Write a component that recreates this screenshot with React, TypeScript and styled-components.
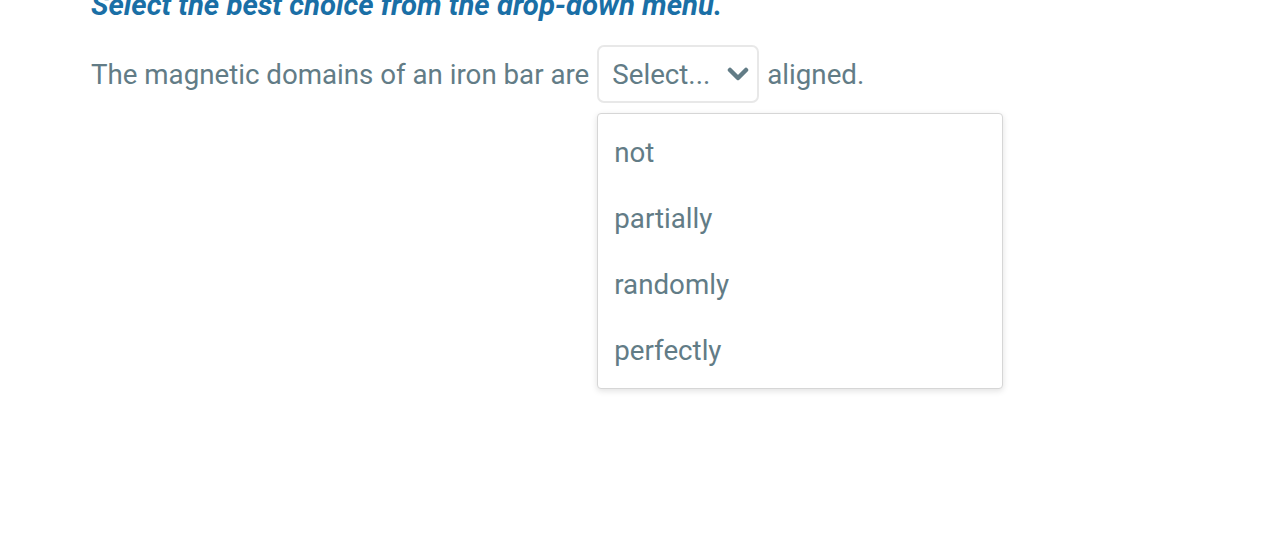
import React from "react";
import styled, { createGlobalStyle } from "styled-components";

const Global = createGlobalStyle`
  html, body { margin: 0; padding: 0; background: #ffffff; }
  body { font-family: Roboto, "Noto Sans", sans-serif; }
`;

const Page = styled.div`
  padding: 0 0 0 91px;
  height: 551px;
  overflow: hidden;
`;

const Heading = styled.h2`
  margin: -12px 0 0 0;
  font-size: 29.3px;
  line-height: 34px;
  font-weight: 700;
  font-style: italic;
  color: #1a6fa6;
`;

const Sentence = styled.div`
  margin-top: 23px;
  display: flex;
  align-items: center;
  gap: 8px;
  font-size: 27.7px;
  color: #627c86;
`;

const SelectWrap = styled.div`
  position: relative;
`;

const SelectBox = styled.div`
  box-sizing: border-box;
  width: 162px;
  height: 58px;
  border: 2px solid #e8e8e8;
  border-radius: 7px;
  display: flex;
  align-items: center;
  justify-content: space-between;
  padding: 0 8px 0 13px;
  color: #627c86;
`;

const Menu = styled.ul`
  position: absolute;
  top: 68px;
  left: 0;
  box-sizing: border-box;
  width: 406px;
  margin: 0;
  padding: 5px 0;
  list-style: none;
  background: #fff;
  border: 1px solid #d6d6d6;
  border-radius: 4px;
  box-shadow: 0 2px 6px rgba(0, 0, 0, 0.12);
`;

const Option = styled.li`
  height: 66px;
  display: flex;
  align-items: center;
  padding: 0 16px;
  font-size: 27.7px;
  color: #627c86;
`;

const Chevron = () => (
  <svg width="22" height="16" viewBox="0 0 22 16" aria-hidden="true">
    <path d="M3 4 L11 12 L19 4" fill="none" stroke="#627c86" strokeWidth="4.5" strokeLinecap="round" strokeLinejoin="round" />
  </svg>
);

export default function App() {
  return (
    <Page>
      <Global />
      <Heading>Select the best choice from the drop-down menu.</Heading>
      <Sentence>
        <span>The magnetic domains of an iron bar are</span>
        <SelectWrap>
          <SelectBox>
            <span>Select...</span>
            <Chevron />
          </SelectBox>
          <Menu>
            <Option>not</Option>
            <Option>partially</Option>
            <Option>randomly</Option>
            <Option>perfectly</Option>
          </Menu>
        </SelectWrap>
        <span>aligned.</span>
      </Sentence>
    </Page>
  );
}
